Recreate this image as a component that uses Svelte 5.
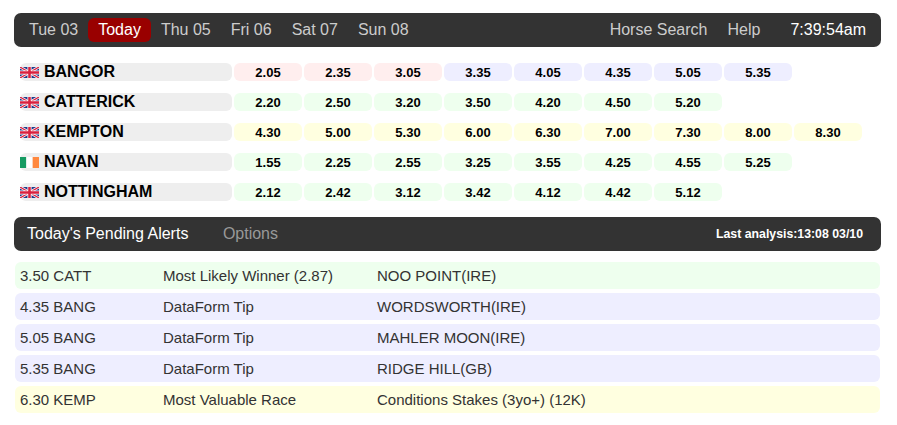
<script>
  const days = [
    { label: 'Tue 03' },
    { label: 'Today', active: true },
    { label: 'Thu 05' },
    { label: 'Fri 06' },
    { label: 'Sat 07' },
    { label: 'Sun 08' }
  ];
  const venues = [
    { name: 'BANGOR', flag: 'uk', times: [['2.05','pink'],['2.35','pink'],['3.05','pink'],['3.35','lilac'],['4.05','lilac'],['4.35','lilac'],['5.05','lilac'],['5.35','lilac']] },
    { name: 'CATTERICK', flag: 'uk', times: ['2.20','2.50','3.20','3.50','4.20','4.50','5.20'].map((t) => [t,'green']) },
    { name: 'KEMPTON', flag: 'uk', times: ['4.30','5.00','5.30','6.00','6.30','7.00','7.30','8.00','8.30'].map((t) => [t,'yellow']) },
    { name: 'NAVAN', flag: 'ie', times: ['1.55','2.25','2.55','3.25','3.55','4.25','4.55','5.25'].map((t) => [t,'green']) },
    { name: 'NOTTINGHAM', flag: 'uk', times: ['2.12','2.42','3.12','3.42','4.12','4.42','5.12'].map((t) => [t,'green']) }
  ];
  const alerts = [
    ['3.50 CATT', 'Most Likely Winner (2.87)', 'NOO POINT(IRE)', 'green'],
    ['4.35 BANG', 'DataForm Tip', 'WORDSWORTH(IRE)', 'lilac'],
    ['5.05 BANG', 'DataForm Tip', 'MAHLER MOON(IRE)', 'lilac'],
    ['5.35 BANG', 'DataForm Tip', 'RIDGE HILL(GB)', 'lilac'],
    ['6.30 KEMP', 'Most Valuable Race', 'Conditions Stakes (3yo+) (12K)', 'yellow']
  ];
</script>

<div class="page">
  <nav class="bar top">
    {#each days as d}
      <span class="item" class:active={d.active}>{d.label}</span>
    {/each}
    <span class="item push">Horse Search</span>
    <span class="item">Help</span>
    <span class="clock">7:39:54am</span>
  </nav>

  <section class="venues">
    {#each venues as v}
      <div class="venue">
        <div class="name">
          {#if v.flag === 'uk'}
            <svg class="flag" viewBox="0 0 60 36" preserveAspectRatio="none">
              <rect width="60" height="36" fill="#1f3a8a" />
              <path d="M0 0L60 36M60 0L0 36" stroke="#fff" stroke-width="9" />
              <path d="M0 0L60 36M60 0L0 36" stroke="#d8213f" stroke-width="4" />
              <path d="M30 0V36M0 18H60" stroke="#fff" stroke-width="13" />
              <path d="M30 0V36M0 18H60" stroke="#d8213f" stroke-width="8" />
            </svg>
          {:else}
            <svg class="flag" viewBox="0 0 3 1" preserveAspectRatio="none">
              <rect width="1" height="1" fill="#169b62" />
              <rect x="1" width="1" height="1" fill="#fff" />
              <rect x="2" width="1" height="1" fill="#ff883e" />
            </svg>
          {/if}
          <span>{v.name}</span>
        </div>
        {#each v.times as [t, c]}
          <div class="time {c}">{t}</div>
        {/each}
      </div>
    {/each}
  </section>

  <div class="bar alerts-head">
    <span class="title">Today's Pending Alerts</span>
    <span class="options">Options</span>
    <span class="analysis">Last analysis:13:08 03/10</span>
  </div>

  <section class="alerts">
    {#each alerts as [a, b, c, col]}
      <div class="alert {col}">
        <span>{a}</span>
        <span>{b}</span>
        <span>{c}</span>
      </div>
    {/each}
  </section>
</div>

<style>
  :global(body) {
    margin: 0;
    background: #fff;
  }
  .page {
    font-family: "Liberation Sans", Arial, sans-serif;
    padding: 13px 16px 0 14px;
  }
  .bar {
    display: flex;
    align-items: center;
    height: 34px;
    background: #333;
    border-radius: 7px;
    font-size: 16px;
  }
  .top {
    padding-left: 5px;
  }
  .item {
    display: block;
    padding: 0 10px;
    height: 24px;
    line-height: 24px;
    color: #ccc;
    border-radius: 6px;
  }
  .item.active {
    background: #990000;
    color: #fff;
  }
  .push {
    margin-left: auto;
  }
  .clock {
    color: #fff;
    margin-left: 20px;
    margin-right: 15px;
  }
  .venues {
    display: flex;
    flex-direction: column;
    gap: 12px;
    margin-top: 16px;
    padding-left: 6px;
  }
  .venue {
    display: flex;
    gap: 2px;
    height: 18px;
  }
  .name {
    display: flex;
    align-items: center;
    width: 212px;
    background: #eee;
    border-radius: 6px;
    font-size: 16px;
    font-weight: bold;
    color: #000;
  }
  .flag {
    display: block;
    width: 19px;
    height: 11px;
    margin-right: 5px;
  }
  .time {
    width: 68px;
    text-align: center;
    line-height: 19px;
    font-size: 13px;
    font-weight: bold;
    color: #000;
    border-radius: 6px;
  }
  .pink { background: #fee; }
  .lilac { background: #eef; }
  .green { background: #efe; }
  .yellow { background: #ffffe0; }
  .alerts-head {
    margin-top: 16px;
    padding: 0 18px 0 13px;
    color: #fff;
  }
  .options {
    margin-left: 34.5px;
    color: #999;
  }
  .analysis {
    margin-left: auto;
    font-size: 12.3px;
    font-weight: bold;
  }
  .alerts {
    display: flex;
    flex-direction: column;
    gap: 4px;
    margin-top: 11px;
    padding: 0 1px;
  }
  .alert {
    display: grid;
    grid-template-columns: 143px 214px 1fr;
    align-items: center;
    height: 27px;
    padding-left: 5px;
    font-size: 15px;
    color: #333;
    border-radius: 6px;
  }
</style>
